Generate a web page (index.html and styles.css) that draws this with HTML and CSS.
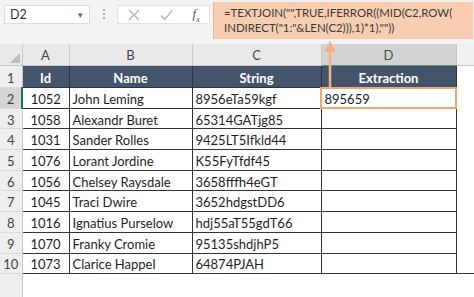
FILE: index.html
```html
<!DOCTYPE html>
<html lang="en">
<head>
    <meta charset="UTF-8">
    <title>TEXTJOIN Extraction</title>
    <link rel="stylesheet" href="styles.css">
</head>
<body>

    <!-- Barra de fórmulas -->
    <div class="toolbar">
        <div class="name-box">
            <span>D2</span>
            <span class="caret">&#9662;</span>
        </div>
        <div class="grip">
            <span></span><span></span><span></span>
        </div>
        <div class="buttons">
            <svg width="12" height="12" viewBox="0 0 12 12"><path d="M1 1L11 11M11 1L1 11" stroke="#b4b4b4" stroke-width="1.3" fill="none"/></svg>
            <svg width="13" height="12" viewBox="0 0 13 12"><path d="M1 6.5L4.8 10.5L12 1.5" stroke="#b4b4b4" stroke-width="1.3" fill="none"/></svg>
            <span class="fx">f<sub>x</sub></span>
        </div>
        <div class="formula">=TEXTJOIN("",TRUE,IFERROR((MID(C2,ROW(<br>INDIRECT("1:"&amp;LEN(C2))),1)*1),""))</div>
    </div>

    <div class="sheet">
        <table>
            <colgroup>
                <col class="c-head">
                <col class="c-a">
                <col class="c-b">
                <col class="c-c">
                <col class="c-d">
                <col>
            </colgroup>
            <tr class="letters">
                <th class="corner"><span class="tri"></span></th>
                <th>A</th>
                <th>B</th>
                <th>C</th>
                <th class="sel-col">D</th>
                <th class="blank"></th>
            </tr>
            <tr class="titles">
                <th class="rh">1</th>
                <td>Id</td>
                <td>Name</td>
                <td>String</td>
                <td>Extraction</td>
                <td class="out"></td>
            </tr>
            <tr>
                <th class="rh sel-row">2</th>
                <td class="num">1052</td>
                <td>John Leming</td>
                <td>8956eTa59kgf</td>
                <td class="active">895659</td>
                <td class="out"></td>
            </tr>
            <tr>
                <th class="rh">3</th>
                <td class="num">1058</td>
                <td>Alexandr Buret</td>
                <td>65314GATjg85</td>
                <td></td>
                <td class="out"></td>
            </tr>
            <tr>
                <th class="rh">4</th>
                <td class="num">1031</td>
                <td>Sander Rolles</td>
                <td>9425LT5Ifkld44</td>
                <td></td>
                <td class="out"></td>
            </tr>
            <tr>
                <th class="rh">5</th>
                <td class="num">1076</td>
                <td>Lorant Jordine</td>
                <td>K55FyTfdf45</td>
                <td></td>
                <td class="out"></td>
            </tr>
            <tr>
                <th class="rh">6</th>
                <td class="num">1056</td>
                <td>Chelsey Raysdale</td>
                <td>3658fffh4eGT</td>
                <td></td>
                <td class="out"></td>
            </tr>
            <tr>
                <th class="rh">7</th>
                <td class="num">1045</td>
                <td>Traci Dwire</td>
                <td>3652hdgstDD6</td>
                <td></td>
                <td class="out"></td>
            </tr>
            <tr>
                <th class="rh">8</th>
                <td class="num">1016</td>
                <td>Ignatius Purselow</td>
                <td>hdj55aT55gdT66</td>
                <td></td>
                <td class="out"></td>
            </tr>
            <tr>
                <th class="rh">9</th>
                <td class="num">1070</td>
                <td>Franky Cromie</td>
                <td>95135shdjhP5</td>
                <td></td>
                <td class="out"></td>
            </tr>
            <tr>
                <th class="rh">10</th>
                <td class="num">1073</td>
                <td>Clarice Happel</td>
                <td>64874PJAH</td>
                <td></td>
                <td class="out"></td>
            </tr>
            <tr class="rest">
                <th class="rh"></th>
                <td class="out" colspan="5"></td>
            </tr>
        </table>

        <!-- Seta da fórmula -->
        <svg class="arrow" width="16" height="50" viewBox="0 0 16 50">
            <path d="M8 50V8" stroke="#f4b183" stroke-width="2.5"/>
            <path d="M2 13L8 2L14 13Z" fill="#f4b183"/>
        </svg>
    </div>

</body>
</html>
```

FILE: styles.css
```css
body {
    margin: 0;
    width: 474px;
    height: 297px;
    overflow: hidden;
    background: #ffffff;
    font-family: Lato, "Open Sans", sans-serif;
}
.toolbar {
    height: 44px;
    background: #f3f3f3;
    display: flex;
    align-items: flex-start;
    position: relative;
}
.name-box {
    margin: 5px 0 0 4px;
    width: 86px;
    height: 19px;
    background: white;
    border: 1px solid #dcdcdc;
    display: flex;
    justify-content: space-between;
    align-items: center;
    padding: 0 6px 0 5px;
    box-sizing: border-box;
    font-size: 12.5px;
    color: #333;
}
.caret {
    font-size: 9px;
    color: #666;
}
.grip {
    width: 27px;
    margin-top: 9px;
    display: flex;
    flex-direction: column;
    align-items: center;
    gap: 2px;
}
.grip span {
    width: 2px;
    height: 2px;
    background: #b0b0b0;
}
.buttons {
    margin-top: 5px;
    width: 93px;
    height: 19px;
    background: white;
    border: 1px solid #e2e2e2;
    box-sizing: border-box;
    display: flex;
    align-items: center;
    justify-content: space-between;
    padding: 0 9px 0 10px;
}
.fx {
    font-family: "Liberation Serif", serif;
    font-style: italic;
    font-size: 13px;
    color: #555;
}
.fx sub {
    font-size: 9px;
}
.formula {
    margin: 2px 0 0 3px;
    width: 260px;
    height: 37px;
    background: #f9cdb0;
    border-left: 1px solid #f2b38c;
    box-sizing: border-box;
    padding: 3px 0 0 10px;
    font-size: 11.4px;
    line-height: 15px;
    color: #3a3a3a;
    white-space: nowrap;
}
.sheet {
    position: relative;
}
table {
    border-collapse: collapse;
    table-layout: fixed;
    width: 474px;
    font-size: 13px;
}
.c-head { width: 22px; }
.c-a { width: 47px; }
.c-b { width: 123px; }
.c-c { width: 129px; }
.c-d { width: 135px; }
th, td {
    padding: 0;
    white-space: nowrap;
    overflow: hidden;
}
.letters th {
    height: 21px;
    background: #e9e9e9;
    font-weight: normal;
    font-size: 13px;
    color: #444;
    border-right: 1px solid #c9c9c9;
    border-bottom: 1px solid #c9c9c9;
}
.letters .sel-col {
    background: #d3d3d3;
    color: #2e5e3e;
    border-bottom: 1px solid #6a8f77;
}
.letters .blank {
    background: #f0f0f0;
    border-right: none;
}
.corner {
    position: relative;
}
.tri {
    position: absolute;
    right: 2px;
    bottom: 2px;
    width: 0;
    height: 0;
    border-left: 10px solid transparent;
    border-bottom: 10px solid #bdbdbd;
}
.rh {
    background: #eeeeee;
    font-weight: normal;
    font-size: 13px;
    color: #444;
    border-right: 1px solid #c9c9c9;
    border-bottom: 1px solid #dadada;
    text-align: center;
    padding-top: 2px;
}
.rh.sel-row {
    background: #d6d6d6;
    border-right: 2px solid #217346;
}
tr {
    height: 20.7px;
}
td {
    border: 1px solid #333;
    color: #1e1e1e;
    padding: 2px 3px 0;
}
td.num {
    text-align: center;
}
.titles {
    height: 22px;
}
.titles td {
    background: #44546a;
    color: white;
    font-weight: bold;
    text-align: center;
    border-color: #2b3442;
}
td.out {
    border: none;
    border-left: 1px solid #333;
}
.titles td.out {
    background: white;
    border-color: #333;
}
td.active {
    outline: 2px solid #f0a673;
    outline-offset: -1px;
}
.rest {
    height: 23px;
}
.rest td.out {
    border-left: none;
    border-top: 1px solid #333;
}
.rest .rh {
    border-bottom: none;
}
.arrow {
    position: absolute;
    left: 322px;
    top: -5px;
}
```
